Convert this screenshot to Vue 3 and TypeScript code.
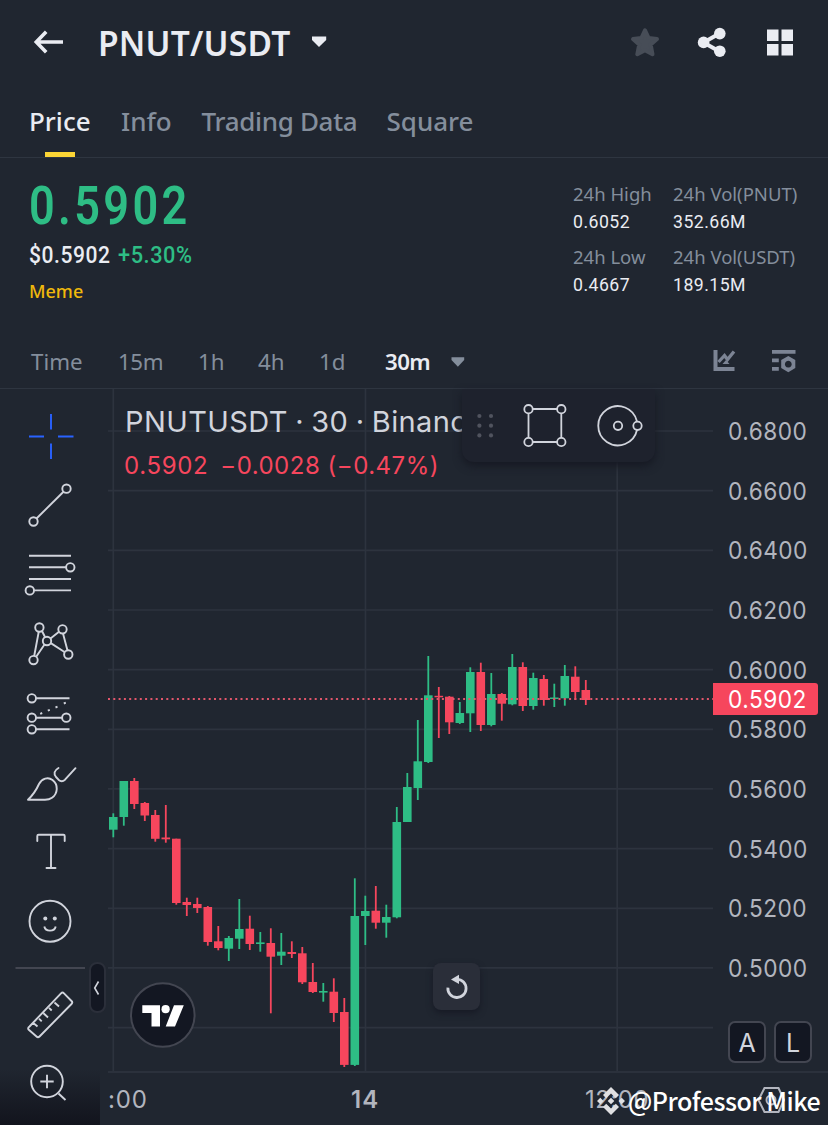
<script setup lang="ts">
type Candle = [up: number, top: number, bottom: number, high: number, low: number]

interface Tool {
  name: string
  height: number
  d: string
  nodes: [number, number][]
  top: number
}

const tabs = ['Price', 'Info', 'Trading Data', 'Square']
const intervals = ['Time', '15m', '1h', '4h', '1d']
const stats = [
  { label: '24h High', value: '0.6052' },
  { label: '24h Vol(PNUT)', value: '352.66M' },
  { label: '24h Low', value: '0.4667' },
  { label: '24h Vol(USDT)', value: '189.15M' },
]

const prices = ['0.6800', '0.6600', '0.6400', '0.6200', '0.6000', '0.5800', '0.5600', '0.5400', '0.5200', '0.5000']
const gridRows = Array.from({ length: 11 }, (_, i) => 431 + i * 59.66)
const gridCols = [113.3, 365.5, 617.2]

const candles: Candle[] = [
  [1, 817, 829.7, 813.3, 837.3],
  [1, 781, 817, 781, 825.7],
  [0, 781, 804, 778, 809],
  [0, 803, 815.5, 802, 821],
  [0, 815, 838.8, 810, 841.7],
  [0, 837.5, 839.3, 805, 842.7],
  [0, 838.7, 903, 838.7, 904.7],
  [0, 902, 905, 897.7, 916],
  [0, 904, 908, 897.7, 913],
  [0, 907, 942, 906, 945.7],
  [0, 941.3, 948, 926, 950.3],
  [1, 938, 948.7, 936, 961],
  [1, 929, 938.7, 899, 949],
  [0, 928.7, 944, 915.7, 950],
  [1, 942.4, 944, 932, 951.7],
  [0, 943, 956.7, 928.3, 1013.3],
  [1, 951.7, 955.7, 933, 965],
  [0, 952, 954, 941.3, 958],
  [0, 953.3, 982.3, 947, 984],
  [0, 982, 992, 963, 993],
  [1, 991, 992.6, 983, 1001.7],
  [0, 991.7, 1013, 978.3, 1022],
  [0, 1012, 1064.9, 998, 1067],
  [1, 916, 1064.9, 878.3, 1066],
  [1, 911, 916, 895.7, 945],
  [0, 910.7, 922.7, 886, 928.7],
  [1, 917, 922.7, 904.7, 937.7],
  [1, 822, 917.3, 807, 918.3],
  [1, 787, 822, 773, 822],
  [1, 761.3, 788, 720, 800],
  [1, 695.3, 762, 656, 763],
  [0, 695.8, 697.3, 687, 738],
  [0, 696.7, 722.3, 696, 734],
  [1, 713, 723, 702, 724],
  [1, 672, 713.3, 667.3, 732],
  [0, 672, 725, 662.7, 731],
  [1, 694, 725, 673, 726.3],
  [0, 694, 703.7, 693, 720.7],
  [1, 667, 704.3, 654, 705.3],
  [0, 667, 706, 662.3, 711],
  [1, 678, 706, 672.7, 709.7],
  [0, 679, 700, 675, 705.7],
  [1, 697.5, 699, 683.7, 707],
  [1, 676, 698.3, 665, 705.7],
  [0, 676.7, 692, 666.3, 700],
  [0, 690, 700, 680, 705],
]
const candleX = (i: number): number => 113.3 + i * 10.5

const icons: Omit<Tool, 'top'>[] = [
  { name: 'cross', height: 69.5, d: 'M51 414v15.5M51 443.500v15.500M29 436.500h15M58 436.500h15.500', nodes: [] },
  { name: 'trend', height: 69.5, d: 'M36.500 518 63.500 491.300', nodes: [[33.5, 521], [66.5, 488.2]] },
  { name: 'fib', height: 69.5, d: 'M29 555.700h42M29 567.300h37M29 579h42M34 590.400h37', nodes: [[70.3, 567.3], [29.8, 590.4]] },
  { name: 'pattern', height: 69.5, d: 'M38.800 631 34.200 655.500M42 630.500 45 636.500M44.500 644 36 656.500M50.500 638 59 631.200M63 633 67.500 650M50.800 642.600 64.500 651.500', nodes: [[39.4, 627], [62.5, 628.8], [47, 640.5], [33.5, 659.6], [68.3, 654]] },
  { name: 'forecast', height: 69.5, d: 'M36 698.300h33.500M36 717.700h26M36 729.300h33.500M40.200 713.800l2-.8M47.800 710.600l2-.8M55.500 707.500l2-.8M63.800 703.500l2-.8', nodes: [[31.8, 698.3], [31.8, 717.7], [66.3, 717.7], [31.8, 729.3]] },
  { name: 'brush', height: 69.5, d: 'M28 799.200C34 793.500 37 788 39 783.500C42 778 48 776 52.500 779.500C58.500 784 58 793 52 797.200C50 798.600 47.500 799.200 45 799.200ZM58.500 767.500C54 770 53.500 773.500 56 776.500L58.500 779.200C60.500 781 63 781 65 779.200L75.500 767.700', nodes: [] },
  { name: 'text', height: 69.5, d: 'M37.300 841V836Q37.300 834.700 38.600 834.700H63.400Q64.700 834.700 64.700 836V841M51 834.700V868M46.500 868H55.500', nodes: [] },
  { name: 'smile', height: 70.5, d: 'M44.300 926C45.500 931.500 54.500 931.500 55.700 926', nodes: [] },
  { name: 'divider', height: 20, d: '', nodes: [] },
  { name: 'ruler', height: 70, d: 'M29.500 1026.500 61 993.300Q62.500 991.800 64 993.300L71.500 1001Q73 1002.500 71.500 1004L39.500 1036.500Q38 1038 36.500 1036.500L28.500 1029.500Q27.500 1028 29.500 1026.500M33 1022.800 37.500 1026.500M39 1018.700 41.700 1021.400M43.500 1013.200 48 1017.500M49 1007.800 51.700 1010.500M54.500 1002.500 59 1006.500', nodes: [] },
  { name: 'zoom', height: 74, d: 'M40.300 1081.500H53.700M47 1074.800V1088.200M58.500 1093.500 65.500 1100', nodes: [] },
]
const tools: Tool[] = icons.map((icon, i) => ({
  ...icon,
  top: 401 + icons.slice(0, i).reduce((sum, item) => sum + item.height, 0),
}))
</script>

<template>
  <div class="screen">
    <header class="header">
      <svg class="back" width="32" height="26" viewBox="33 29 32 26" fill="none" stroke="#eaecf2" stroke-width="3.600"><path d="M46.200 31.800 36.300 42 46.200 52.200M36.500 42H63" /></svg>
      <h1 class="pair">PNUT/USDT</h1>
      <svg class="pair-caret" width="16" height="13" viewBox="311 36 16 13" fill="#eaecf2"><path d="M312 36.500H326.200V40L319 47 312 40Z" /></svg>
      <svg class="actions" width="154" height="32" viewBox="629 26 154 32">
        <path d="M645 30 648.500 37.800 657 38.900 650.700 44.700 652.500 54.500 645 50.400 637.300 54.500 639.200 44.700 633 38.900 641.500 37.800Z" fill="#474d57" stroke="#474d57" stroke-width="4" stroke-linejoin="round" transform="translate(645 42.500) scale(1 .98) translate(-645 -42.500)" />
        <path d="M719.500 33.500 703.500 42.500 719.500 51.500" fill="none" stroke="#eaecf2" stroke-width="4" />
        <g fill="#eaecf2"><circle cx="719.800" cy="33.600" r="5.800" /><circle cx="703.600" cy="42.400" r="5.800" /><circle cx="719.800" cy="51.200" r="5.800" /></g>
      </svg>
      <svg class="apps" width="28" height="28" viewBox="766 28 28 28" fill="#eaecf2"><path d="M767 29.500h11.500V41H767zM781.500 29.500H793V41H781.500zM767 44h11.500v11.500H767zM781.500 44H793v11.500H781.500z" /></svg>
    </header>

    <nav class="tabs">
      <span v-for="(tab, i) in tabs" :key="tab" class="tab" :class="['t' + i, { active: i === 0 }]">{{ tab }}</span>
    </nav>

    <section class="summary">
      <div class="quote">
        <div class="last">0.5902</div>
        <div class="fiat"><span class="usd">$0.5902</span><span class="change">+5.30%</span></div>
        <div class="tag">Meme</div>
      </div>
      <dl class="stats">
        <div v-for="s in stats" :key="s.label" class="stat">
          <dt>{{ s.label }}</dt>
          <dd>{{ s.value }}</dd>
        </div>
      </dl>
    </section>

    <nav class="intervals">
      <span v-for="(item, i) in intervals" :key="item" class="interval" :class="'i' + i">{{ item }}</span>
      <span class="interval current">30m</span>
      <svg class="interval-caret" width="14" height="11" viewBox="451 354 14 11" fill="#848e9c"><path d="M451.500 355.300H464.200V358L457.900 364.800 451.500 358Z" /></svg>
      <svg class="interval-icons" width="84" height="26" viewBox="713 348 84 26" fill="#7c8494">
        <path d="M713.500 350h4v17h17v4h-21z" />
        <path d="M718.500 362 724.500 355.500 727.500 359.500 734 351.500" fill="none" stroke="#7c8494" stroke-width="3.300" />
        <path d="M722.500 364 726 360 729.500 364Z" />
        <path d="M772 350h23.500v3.800H772zM772 358.500h6.800v3.800H772zM772 367h6.800v3.800H772z" />
        <path fill-rule="evenodd" d="M788.300 356 795.300 360V368L788.300 372.200 781.200 368V360ZM788.300 360.800a3.400 3.400 0 1 0 .01 0Z" />
      </svg>
    </nav>

    <main class="chart">
      <aside class="tools">
        <svg v-for="tool in tools" :key="tool.name" class="tool" :class="tool.name" width="100" :height="tool.height" :viewBox="`0 ${tool.top} 100 ${tool.height}`">
          <path :d="tool.d" />
          <circle v-for="(n, i) in tool.nodes" :key="i" :cx="n[0]" :cy="n[1]" r="4.200" />
          <template v-if="tool.name === 'smile'">
            <circle cx="50" cy="920.800" r="20.500" />
            <circle class="dot" cx="45.300" cy="918" r="2" /><circle class="dot" cx="54.800" cy="918" r="2" />
          </template>
          <circle v-if="tool.name === 'zoom'" cx="47" cy="1081.500" r="15.800" />
          <path v-if="tool.name === 'divider'" class="rule" d="M15.500 968H85" />
        </svg>
      </aside>

      <div class="plot">
        <svg class="canvas" width="605" height="684" viewBox="108 389 605 684">
          <g class="grid">
            <path v-for="y in gridRows" :key="y" :d="`M108 ${y}H713`" />
            <path v-for="x in gridCols" :key="x" :d="`M${x} 389V1071`" />
          </g>
          <g v-for="(c, i) in candles" :key="i" :class="c[0] ? 'up' : 'down'">
            <rect :x="candleX(i) - 0.9" :y="c[3]" width="1.800" :height="c[4] - c[3]" />
            <rect :x="candleX(i) - 4.3" :y="c[1]" width="8.600" :height="c[2] - c[1]" />
          </g>
          <path class="last-line" d="M108 698.900H713" />
        </svg>
        <div class="legend">
          <div class="symbol">PNUTUSDT · 30 · Binance</div>
          <div class="delta"><span>0.5902</span><span class="diff">−0.0028 (−0.47%)</span></div>
        </div>
        <svg class="tv-logo" width="66" height="66" viewBox="130 982 66 66">
          <circle cx="162.800" cy="1015" r="31.800" fill="#131722" stroke="#434651" stroke-width="2" />
          <g fill="#fff"><path d="M142.300 1005.300H160V1026.500H151.500V1013H142.300ZM174 1005.300H183.800L175 1026.500H165.700Z" /><circle cx="165.600" cy="1009.200" r="4.100" /></g>
        </svg>
        <button class="reset" aria-label="Reset chart">
          <svg width="26" height="28" viewBox="443.500 973 26 28"><path d="M447.400 987.600A9.100 9.100 0 1 0 456.500 979.300" fill="none" stroke="#d1d4dc" stroke-width="2.800" /><path d="M450.500 979.400 458.500 974.800V983.900Z" fill="#d1d4dc" /></svg>
        </button>
      </div>

      <div class="axis">
        <div v-for="p in prices" :key="p" class="price"><span>{{ p }}</span></div>
        <div class="last-tag"><span>0.5902</span></div>
        <div class="modes"><span>A</span><span>L</span></div>
      </div>

      <footer class="times">
        <span class="time first">:00</span>
        <span class="time day">14</span>
        <span class="time noon">12:00</span>
        <svg class="settings" width="28" height="28" viewBox="757 1085 28 28" fill="none" stroke="#b2b5be" stroke-width="2"><path d="M758.500 1099 764.500 1087H778.500L784 1099 778.500 1111H764.500Z" /><circle cx="771" cy="1099" r="4.500" /></svg>
      </footer>

      <button class="collapse" aria-label="Collapse toolbar"><svg width="8" height="16" viewBox="0.500 0 8 16"><path d="M6 1.500 2.200 8 6 14.500" /></svg></button>
      <div class="floating">
        <svg width="193" height="73" viewBox="462 389 193 73" fill="none" stroke="#d1d4dc" stroke-width="1.800">
          <g fill="#50535e" stroke="none"><circle v-for="n in 6" :key="n" :cx="n % 2 ? 479.400 : 491" :cy="416 + Math.floor((n - 1) / 2) * 9.700" r="2.100" /></g>
          <path d="M532.500 409H557M532.500 442H557M528.500 413.200V438M561.300 413.200V438" />
          <circle cx="528.500" cy="409.200" r="4.200" /><circle cx="561.300" cy="409.200" r="4.200" /><circle cx="528.500" cy="442" r="4.200" /><circle cx="561.300" cy="442" r="4.200" />
          <path d="M637 421.500A19.600 19.600 0 1 0 637 430" /><circle cx="618" cy="425.800" r="4.200" /><circle cx="637.500" cy="425.800" r="4.200" />
        </svg>
      </div>
      <div class="watermark">
        <svg width="28" height="28" viewBox="-14 -14 28 28" fill="#e0e0e2"><path d="M0-14 8-6 4.800-2.800 0-7.600-4.800-2.800-8-6ZM0 14 8 6 4.800 2.800 0 7.600-4.800 2.800-8 6ZM0-3.300 3.300 0 0 3.300-3.300 0ZM-10.700-3.200-7.500 0-10.700 3.200-14 0ZM10.700-3.200 14 0 10.700 3.200 7.500 0Z" /></svg>
        <span>@Professor Mike</span>
      </div>
    </main>
  </div>
</template>

<style>
html, body { margin: 0; background: #202630; }
</style>

<style scoped>
* { box-sizing: border-box; }
.screen { width: 828px; height: 1125px; overflow: hidden; display: flex; flex-direction: column; background: #202630; color: #eaecf2; font-family: "Noto Sans", "Open Sans", sans-serif; white-space: nowrap; }
svg { display: block; flex: none; }

.header { height: 86px; display: flex; align-items: center; padding: 0 34px 2px 33px; }
.pair { margin: 2px 0 0 33px; width: 193px; font-size: 33.500px; line-height: 40px; font-weight: 600; letter-spacing: .2px; }
.pair-caret { margin-left: 20px; }
.actions { margin-left: auto; width: 154px; margin-right: -17px; }

.tabs { height: 72px; display: flex; padding-left: 29px; border-bottom: 1.500px solid #2e3540; font-size: 26px; line-height: 71px; font-weight: 500; color: #848e9c; }
.tab { flex: none; }
.t0 { width: 92px; }
.t1 { width: 80.500px; }
.t2 { width: 185px; letter-spacing: -.32px; }
.active { position: relative; color: #eaecf2; }
.active::after { content: ""; position: absolute; left: 16px; bottom: 0; width: 30px; height: 5px; background: #fcd535; }

.summary { height: 176px; display: flex; justify-content: space-between; padding: 20px 0 0 29px; }
.quote { width: 200px; font-family: Roboto, sans-serif; }
.last { height: 56px; font-size: 54px; line-height: 56px; font-weight: 600; letter-spacing: 4px; color: #2ebd85; transform: scaleX(.835); transform-origin: 0 50%; }
.fiat { margin-top: 7px; display: flex; height: 30px; line-height: 30px; font-size: 23px; font-weight: 500; letter-spacing: .6px; }
.usd { width: 89px; transform: scaleX(.915); transform-origin: 0 50%; }
.change { color: #2ebd85; transform: scaleX(.945); transform-origin: 0 50%; }
.tag { margin-top: 5px; font: 500 18px/30px "Noto Sans", sans-serif; color: #f0b90b; }
.stats { margin: 3px 28px 0 0; width: 227px; height: 127px; display: grid; grid-template: 63px 63px / 100px 127px; }
.stat dt { font-size: 18.500px; line-height: 26px; color: #848e9c; }
.stat dd { margin: 1px 0 0; font: 400 19px/28px Roboto, sans-serif; letter-spacing: .5px; color: #eaecf2; transform: scaleX(.93); transform-origin: 0 50%; }

.intervals { height: 55px; display: flex; align-items: center; padding: 0 31px 0 31px; border-bottom: 1.500px solid #2e3540; color: #848e9c; font-size: 22.300px; }
.interval { flex: none; }
.i0 { width: 87px; }
.i1 { width: 80px; letter-spacing: -.4px; }
.i2 { width: 60px; }
.i3 { width: 61px; }
.i4 { width: 66px; }
.current { color: #eaecf2; font-weight: 600; width: 66px; letter-spacing: -.6px; }
.interval-icons { margin-left: auto; }

.chart { position: relative; height: 736px; display: grid; grid-template: 684px 52px / 108px 605px 115px; font-family: Inter, sans-serif; }
.tools { grid-row: 1 / 3; width: 100px; height: 736px; padding-top: 12px; background: linear-gradient(to bottom, transparent 680px, #12141d 736px); }
.tool { fill: none; stroke: #d1d4dc; stroke-width: 1.900; stroke-linejoin: round; stroke-linecap: butt; }
.cross { stroke: #2962ff; }
.text, .brush { stroke-linecap: round; }
.dot { fill: #d1d4dc; stroke: none; }
.rule { stroke: #434651; }
.plot { position: relative; border-bottom: 2px solid #2b313c; }
.canvas { position: absolute; inset: 0; }
.grid path { stroke: #2d333e; stroke-width: 1.700; fill: none; }
.up { fill: #2ebd85; }
.down { fill: #f6465d; }
.last-line { stroke: #e2566b; stroke-width: 2; stroke-dasharray: 2 3.300; }
.legend { position: relative; padding: 12px 0 0 17px; width: 355px; overflow: hidden; }
.symbol { height: 43px; font-size: 29px; line-height: 42px; color: #d1d4dc; letter-spacing: .4px; word-spacing: -1.200px; }
.delta { height: 44px; margin-left: -1px; font-size: 24px; line-height: 43px; letter-spacing: .65px; color: #f6465d; }
.diff { margin-left: 12px; letter-spacing: .5px; }
.tv-logo { position: absolute; left: 22px; top: 593px; }
.reset { position: absolute; left: 325px; top: 574px; width: 47px; height: 47px; border: 0; padding: 0; border-radius: 8px; background: #2a2e39; display: grid; place-items: center; box-shadow: 0 3px 6px #171a25; }

.axis { position: relative; padding: 13px 0 0 15px; border-bottom: 2px solid #2b313c; color: #b2b5be; }
.price { height: 59.660px; font-size: 24px; line-height: 60px; letter-spacing: .5px; }
.price span, .last-tag span { display: inline-block; transform: scaleX(.945); transform-origin: 0 50%; }
.last-tag { position: absolute; left: 0; top: 294px; width: 105px; height: 32px; padding-left: 15px; border-radius: 0 3px 3px 0; background: #f6465d; color: #fff; font-size: 24px; line-height: 33px; letter-spacing: .5px; }
.modes { display: flex; gap: 8px; margin-top: 22px; }
.modes span { width: 38px; height: 42px; border: 2px solid #434651; border-radius: 7px; background: #131722; color: #d1d4dc; font-size: 25px; line-height: 40px; text-align: center; }
.times { grid-column: 2 / 4; display: flex; align-items: center; height: 52px; padding-top: 1px; color: #b2b5be; font-size: 24px; letter-spacing: .5px; }
.time { flex: none; }
.first { width: 243px; letter-spacing: .8px; }
.day { width: 234px; font-weight: 600; letter-spacing: 1px; }
.noon { width: 64px; }
.settings { margin-left: auto; margin-right: 43px; }

.collapse { position: absolute; left: 89px; top: 573px; width: 17px; height: 51px; padding: 0 1px 0 0; border: 2px solid #2b2f3a; border-radius: 8px; background: #131722; display: grid; place-items: center; }
.collapse path { fill: none; stroke: #d1d4dc; stroke-width: 1.600; }
.floating { position: absolute; left: 462px; top: 0; width: 193px; height: 73px; border-radius: 0 0 12px 12px; background: #1e222d; box-shadow: 0 4px 8px #161923; }
.watermark { position: absolute; left: 597px; top: 694px; height: 36px; display: flex; align-items: center; gap: 3px; font: 500 25px/36px "Noto Sans CJK SC", sans-serif; color: #fff; }
.watermark span { margin-top: -3px; letter-spacing: -.48px; }
</style>
